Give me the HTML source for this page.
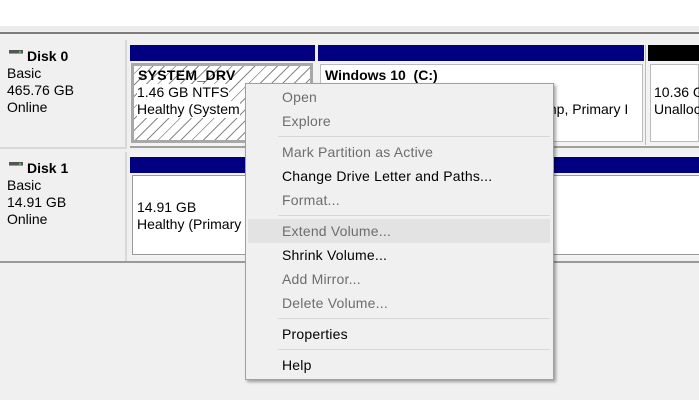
<!DOCTYPE html>
<html><head><style>
*{margin:0;padding:0;box-sizing:border-box}
body{width:699px;height:400px;background:#f0f0f0;position:relative;overflow:hidden;font-family:"Liberation Sans",sans-serif;font-size:14px;color:#000}
.a{position:absolute}
.t{position:absolute;white-space:nowrap;line-height:17px}
.mi{position:absolute;left:282px;white-space:nowrap;font-size:14px;line-height:17px;letter-spacing:.2px}
.g{color:#6d6d6d}
.sep{position:absolute;left:278px;width:272px;height:1px;background:#d7d7d7}
</style></head><body>
<div class="a" style="left:0;top:0;width:699px;height:26px;background:#fff"></div>
<div class="a" style="left:0;top:26px;width:699px;height:5px;background:#ececec"></div>
<div class="a" style="left:0;top:32px;width:699px;height:2px;background:#7d7d7d"></div>

<!-- Disk 0 -->
<div class="a" style="left:0;top:40px;width:127px;height:109px;background:#f0f0f0;border-right:2px solid #d8d8d8;border-bottom:2px solid #d8d8d8"></div>
<div class="a" style="left:9px;top:50px;width:14px;height:4px;background:#555;border-bottom:1px solid #999"></div>
<div class="a" style="left:19px;top:51px;width:2px;height:2px;background:#3c3"></div>
<div class="t" style="left:27px;top:48px;font-weight:bold">Disk 0</div>
<div class="t" style="left:7px;top:65px">Basic<br>465.76 GB<br>Online</div>

<div class="a" style="left:130px;top:45px;width:185px;height:16px;background:#000080"></div>
<div class="a" style="left:318px;top:45px;width:326px;height:16px;background:#000080"></div>
<div class="a" style="left:648px;top:45px;width:51px;height:16px;background:#000"></div>
<div class="a" style="left:130px;top:61px;width:569px;height:85px;background:#f3f3f3"></div>
<div class="a" style="left:131px;top:63px;width:182px;height:80px;border:3px solid #a8a8a8;background:repeating-linear-gradient(135deg,#fff 0 5px,#888 5px 6px,#fff 6px 8px)"></div>
<div class="a" style="left:320px;top:64px;width:323px;height:78px;background:#fff;border:1px solid #bbb"></div>
<div class="a" style="left:650px;top:64px;width:49px;height:78px;background:#fff;border:1px solid #bbb"></div>
<div class="a" style="left:645px;top:45px;width:1px;height:100px;background:#bbb"></div>
<div class="t" style="left:138px;top:67px;font-weight:bold;letter-spacing:.3px">SYSTEM_DRV</div>
<div class="t" style="left:137px;top:84px;background:#fff">1.46 GB NTFS</div>
<div class="t" style="left:137px;top:101px;background:#fff">Healthy (System</div>
<div class="t" style="left:325px;top:67px;font-weight:bold">Windows 10&nbsp; (C:)</div>
<div class="t" style="left:545px;top:101px">mp, Primary I</div>
<div class="t" style="left:654px;top:84px">10.36 G<br>Unalloc</div>
<div class="a" style="left:130px;top:146px;width:569px;height:2px;background:#a0a0a0"></div>

<!-- Disk 1 -->
<div class="a" style="left:0;top:152px;width:127px;height:110px;background:#f0f0f0;border-right:2px solid #d8d8d8"></div>
<div class="a" style="left:9px;top:162px;width:14px;height:4px;background:#555;border-bottom:1px solid #999"></div>
<div class="a" style="left:19px;top:163px;width:2px;height:2px;background:#3c3"></div>
<div class="t" style="left:27px;top:160px;font-weight:bold">Disk 1</div>
<div class="t" style="left:7px;top:177px">Basic<br>14.91 GB<br>Online</div>
<div class="a" style="left:130px;top:153px;width:569px;height:104px;background:#f3f3f3"></div>
<div class="a" style="left:130px;top:157px;width:569px;height:16px;background:#000080"></div>
<div class="a" style="left:132px;top:175px;width:567px;height:80px;background:#fff;border:1px solid #999;border-right:none"></div>
<div class="t" style="left:137px;top:199px">14.91 GB<br>Healthy (Primary</div>
<div class="a" style="left:0;top:261px;width:699px;height:2px;background:#9a9a9a"></div>

<!-- menu -->
<div class="a" style="left:245px;top:83px;width:309px;height:297px;background:#f0f0f0;border:1px solid #a0a0a0;box-shadow:2px 2px 3px rgba(0,0,0,.35)"></div>
<div class="a" style="left:248px;top:219px;width:302px;height:24px;background:#e3e3e3"></div>
<div class="mi g" style="top:89px">Open</div>
<div class="mi g" style="top:113px">Explore</div>
<div class="sep" style="top:136px"></div>
<div class="mi g" style="top:144px">Mark Partition as Active</div>
<div class="mi" style="top:168px">Change Drive Letter and Paths...</div>
<div class="mi g" style="top:192px">Format...</div>
<div class="sep" style="top:215px"></div>
<div class="mi g" style="top:223px">Extend Volume...</div>
<div class="mi" style="top:247px">Shrink Volume...</div>
<div class="mi g" style="top:271px">Add Mirror...</div>
<div class="mi g" style="top:295px">Delete Volume...</div>
<div class="sep" style="top:318px"></div>
<div class="mi" style="top:326px">Properties</div>
<div class="sep" style="top:349px"></div>
<div class="mi" style="top:357px">Help</div>
</body></html>
